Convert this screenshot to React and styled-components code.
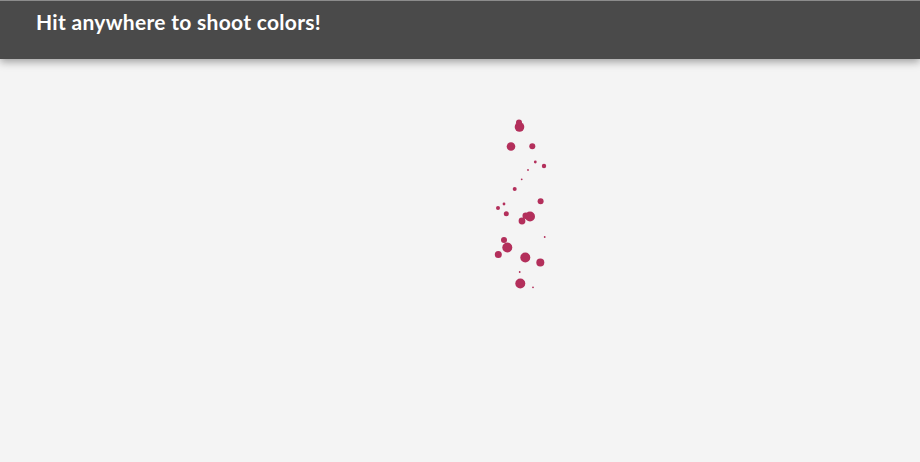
import React from "react";
import styled, { createGlobalStyle } from "styled-components";

const GlobalStyle = createGlobalStyle`
  html, body {
    margin: 0;
    padding: 0;
    background: #f4f4f4;
    height: 100%;
    overflow: hidden;
  }
  #root {
    height: 100%;
  }
`;

const Page = styled.div`
  display: flex;
  flex-direction: column;
  height: 100vh;
  background: #f4f4f4;
  cursor: crosshair;
`;

const Header = styled.header`
  position: relative;
  z-index: 1;
  display: flex;
  align-items: flex-start;
  height: 58px;
  padding: 0 36px;
  background: #4a4a4a;
  border-top: 1px solid #8c8c8c;
  box-shadow: 0 3px 8px rgba(0, 0, 0, 0.35);
`;

const Title = styled.h1`
  margin: 8px 0 0;
  font-family: "Lato", "Open Sans", sans-serif;
  font-size: 21px;
  font-weight: 700;
  color: #ffffff;
  letter-spacing: 0.3px;
`;

const Canvas = styled.div`
  flex: 1;
  position: relative;
`;

const Splatter = styled.svg`
  position: absolute;
  inset: 0;
  width: 100%;
  height: 100%;
`;

// drops of the last shot, in page coordinates
const drops = [
  [519.5, 127, 4.8],
  [519, 122.5, 3],
  [511, 146.5, 4.3],
  [532.3, 146.3, 3],
  [535.3, 162, 1.4],
  [544, 166, 2.2],
  [528, 170, 0.9],
  [521.7, 179.3, 0.9],
  [514.7, 189, 2],
  [540.6, 201.3, 3],
  [498, 208, 2],
  [504, 204, 1.4],
  [506.3, 213.7, 2.5],
  [525.7, 215.7, 3.2],
  [530, 216.5, 5],
  [522, 221, 3.4],
  [544.7, 237, 0.9],
  [504, 240, 3],
  [507.3, 247.5, 5],
  [498.3, 254.5, 3.5],
  [525.3, 257.5, 5],
  [540.3, 262.5, 4],
  [519.7, 272, 0.9],
  [520.3, 283.5, 5],
  [533, 287.3, 0.9],
];

export default function App() {
  return (
    <>
      <GlobalStyle />
      <Page>
        <Header>
          <Title>Hit anywhere to shoot colors!</Title>
        </Header>
        <Canvas>
          <Splatter viewBox="0 59 920 403" preserveAspectRatio="xMinYMin slice">
            {drops.map(([cx, cy, r], i) => (
              <circle key={i} cx={cx} cy={cy} r={r} fill="#b32f5b" />
            ))}
          </Splatter>
        </Canvas>
      </Page>
    </>
  );
}
